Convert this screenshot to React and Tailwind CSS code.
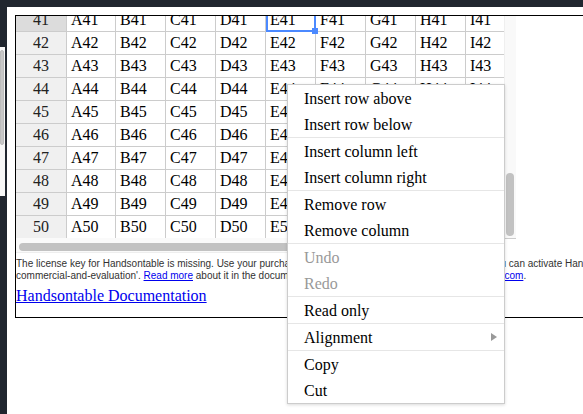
import React from "react";

const rows = [41, 42, 43, 44, 45, 46, 47, 48, 49, 50];
const cols = ["A", "B", "C", "D", "E", "F", "G", "H", "I"];

const menu = [
  [{ t: "Insert row above" }, { t: "Insert row below" }],
  [{ t: "Insert column left" }, { t: "Insert column right" }],
  [{ t: "Remove row" }, { t: "Remove column" }],
  [{ t: "Undo", d: true }, { t: "Redo", d: true }],
  [{ t: "Read only" }],
  [{ t: "Alignment", sub: true }],
  [{ t: "Copy" }, { t: "Cut" }],
];

export default function App() {
  return (
    <div className="relative w-[583px] h-[414px] overflow-hidden bg-[#20262f] flex flex-col">
      <div className="h-[7px] shrink-0" />
      <div className="flex flex-1 min-h-0">
        <div className="w-[7px] shrink-0 bg-[#20262f]">
          <div className="mt-[40px] w-[5px] h-[149px] bg-[#f7f7f7] pt-[3px]">
            <div className="w-[4px] h-[95px] rounded-b-[3px] rounded-t-[3px] bg-[#c8c8c8] border border-[#bdbdbd]" />
          </div>
        </div>
        <div className="flex-1 bg-white pt-[8px] pl-[8px]">
          <div className="w-[900px] h-[303px] border border-black flex flex-col">
            {/* table viewport */}
            <div className="relative w-[500px] h-[237px] overflow-hidden shrink-0 bg-white" style={{ fontFamily: '"Liberation Serif", "Times New Roman", serif' }}>
              <div className="absolute left-0 top-[-7px] flex flex-col">
                {rows.map((r) => (
                  <div key={r} className="flex h-[23px]">
                    <div className={`w-[51px] h-[23px] border-r border-b border-[#cccccc] text-center text-[16px] leading-[21px] text-[#222] ${r === 41 ? "bg-[#dcdcdc]" : "bg-[#f0f0f0]"}`}>
                      {r}
                    </div>
                    {cols.map((c, i) => (
                      <div
                        key={c}
                        className={`${i === 0 ? "w-[49px]" : "w-[50px]"} h-[23px] border-r border-b border-[#cccccc] pl-[4px] text-[16px] leading-[21px] text-black whitespace-nowrap overflow-hidden`}
                      >
                        {c}
                        {r}
                      </div>
                    ))}
                  </div>
                ))}
              </div>
              {/* selection */}
              <div className="absolute left-[250px] top-[-10px] w-[50px] h-[26px] border-2 border-[#4b89ff]" />
              <div className="absolute left-[296px] top-[12px] w-[6px] h-[6px] bg-[#4b89ff]" />
              {/* vertical scrollbar */}
              <div className="absolute left-[488px] top-0 w-[12px] h-[222px] bg-[#f9f9f9] border-l border-[#efefef]">
                <div className="absolute left-[1px] top-[157px] w-[8px] h-[63px] rounded-full bg-[#c2c2c2]" />
              </div>
              {/* horizontal scrollbar */}
              <div className="absolute left-0 top-[222px] w-[488px] h-[15px] bg-[#fafafa] border-b border-[#eeeeee]">
                <div className="absolute left-[3px] top-[5px] w-[330px] h-[8px] rounded-full bg-[#c2c2c2]" />
              </div>
            </div>
            {/* license info */}
            <div
              className="pt-[5px] text-[10px] leading-[12px] text-[#323232] whitespace-nowrap"
              style={{ fontFamily: '"Liberation Sans", Arial, Helvetica, sans-serif' }}
            >
              <div>
                The license key for Handsontable is missing. Use your purchased key to activate the product. Alternatively, you can activate Handsontable to use for non-commercial purposes by passing the key: 'non-
              </div>
              <div>
                commercial-and-evaluation'. <span className="text-[#0000ee] underline">Read more</span> about it in the documentation or contact us at{" "}
                <span className="text-[#0000ee] underline">support@handsontable.com</span>.
              </div>
            </div>
            <div
              className="pt-[5px] text-[16px] leading-[18px] text-[#0000ee] underline"
              style={{ fontFamily: '"Liberation Serif", "Times New Roman", serif' }}
            >
              Handsontable Documentation
            </div>
          </div>
        </div>
      </div>

      {/* context menu */}
      <div
        className="absolute left-[287px] top-[84px] w-[218px] bg-white border border-[#cccccc] shadow-[0_1px_3px_rgba(0,0,0,0.15)] flex flex-col"
        style={{ fontFamily: '"Liberation Serif", "Times New Roman", serif' }}
      >
        {menu.map((group, gi) => (
          <div key={gi} className={gi > 0 ? "border-t border-[#e6e6e6]" : ""}>
            {group.map((it) => (
              <div
                key={it.t}
                className={`relative h-[26px] pl-[16px] pt-[2px] text-[16px] leading-[24px] whitespace-nowrap ${it.d ? "text-[#999999]" : "text-black"}`}
              >
                {it.t}
                {it.sub && (
                  <svg className="absolute right-[7px] top-[9px]" width="6" height="8" viewBox="0 0 6 8">
                    <path d="M0 0 L6 4 L0 8 Z" fill="#999" />
                  </svg>
                )}
              </div>
            ))}
          </div>
        ))}
      </div>
    </div>
  );
}
